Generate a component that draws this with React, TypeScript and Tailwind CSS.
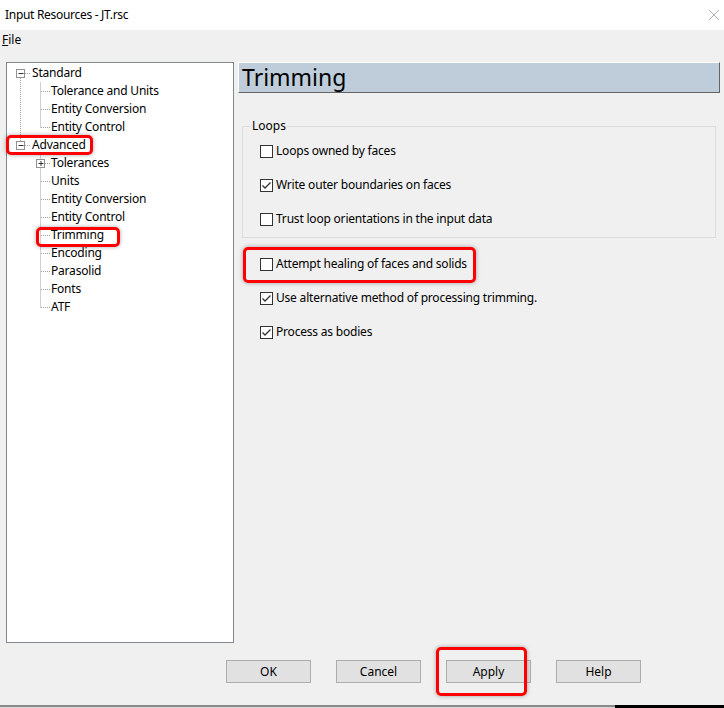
import React from "react";

const font = { fontFamily: '"Noto Sans", "Segoe UI", sans-serif' };

type Node = { label: string; depth: 0 | 1 };

const treeRows: Node[] = [
  { label: "Standard", depth: 0 },
  { label: "Tolerance and Units", depth: 1 },
  { label: "Entity Conversion", depth: 1 },
  { label: "Entity Control", depth: 1 },
  { label: "Advanced", depth: 0 },
  { label: "Tolerances", depth: 1 },
  { label: "Units", depth: 1 },
  { label: "Entity Conversion", depth: 1 },
  { label: "Entity Control", depth: 1 },
  { label: "Trimming", depth: 1 },
  { label: "Encoding", depth: 1 },
  { label: "Parasolid", depth: 1 },
  { label: "Fonts", depth: 1 },
  { label: "ATF", depth: 1 },
];

// red annotation rectangles drawn over the dialog
function Callout({ className }: { className: string }) {
  return (
    <div
      className={`pointer-events-none absolute rounded-[5px] border-[3px] border-[#ff0000] shadow-[0_0_4px_rgba(0,0,0,0.35)] ${className}`}
    />
  );
}

function ExpandBox({ x, y, plus }: { x: number; y: number; plus?: boolean }) {
  return (
    <g>
      <rect x={x - 4} y={y - 4} width={8} height={8} fill="#fff" stroke="#919191" />
      <line x1={x - 2} y1={y} x2={x + 3} y2={y} stroke="#333" />
      {plus && <line x1={x + 0.5} y1={y - 2.5} x2={x + 0.5} y2={y + 2.5} stroke="#333" />}
    </g>
  );
}

function TreeLines() {
  // coordinates relative to the tree's padding box, row centres every 18px
  const cy = (i: number) => 10.5 + i * 18;
  const dot = { stroke: "#a0a0a0", strokeDasharray: "1 1", strokeWidth: 1 };
  const children = [1, 2, 3, 5, 6, 7, 8, 9, 10, 11, 12, 13];
  return (
    <svg className="pointer-events-none absolute left-0 top-0" width="226" height="260">
      <line x1={13.5} y1={15} x2={13.5} y2={cy(4) - 4} {...dot} />
      <line x1={18} y1={cy(0)} x2={24} y2={cy(0)} {...dot} />
      <line x1={18} y1={cy(4)} x2={24} y2={cy(4)} {...dot} />
      <line x1={33.5} y1={cy(0) + 9} x2={33.5} y2={cy(3)} {...dot} />
      <line x1={33.5} y1={cy(4) + 9} x2={33.5} y2={cy(13)} {...dot} />
      {children.map((i) => (
        <line key={i} x1={34} y1={cy(i)} x2={43} y2={cy(i)} {...dot} />
      ))}
      <ExpandBox x={13.5} y={cy(0)} />
      <ExpandBox x={13.5} y={cy(4)} />
      <ExpandBox x={33.5} y={cy(5)} plus />
    </svg>
  );
}

function Tree() {
  return (
    <div className="relative h-[581px] w-[228px] shrink-0 border border-[#828790] bg-white pt-[1px]">
      <TreeLines />
      {treeRows.map((r, i) => (
        <div
          key={i}
          className={`flex h-[18px] items-center text-[12px] tracking-[-0.2px] text-black ${r.depth === 0 ? "pl-[25px]" : "pl-[44px]"}`}
        >
          {r.label}
        </div>
      ))}
      <Callout className="left-[-1px] top-[72px] h-[20px] w-[87px]" />
      <Callout className="left-[29px] top-[164px] h-[20px] w-[84px]" />
    </div>
  );
}

function CheckBox({ checked }: { checked: boolean }) {
  return (
    <span className="flex h-[13px] w-[13px] shrink-0 items-center justify-center border border-[#333] bg-white">
      {checked && (
        <svg width="11" height="11" viewBox="0 0 11 11">
          <polyline points="1.5,5.5 4,8 9.5,2.5" fill="none" stroke="#333" strokeWidth="1.3" />
        </svg>
      )}
    </span>
  );
}

function Option({
  label,
  checked,
  className = "",
  children,
}: {
  label: string;
  checked: boolean;
  className?: string;
  children?: React.ReactNode;
}) {
  return (
    <label className={`relative flex h-[18px] items-center gap-[3px] text-[12px] tracking-[-0.2px] text-black ${className}`}>
      <CheckBox checked={checked} />
      <span>{label}</span>
      {children}
    </label>
  );
}

function Button({ label, children }: { label: string; children?: React.ReactNode }) {
  return (
    <button className="relative h-[23px] w-[85px] border border-[#adadad] bg-[#e1e1e1] text-[12px] text-black">
      {label}
      {children}
    </button>
  );
}

export default function App() {
  return (
    <div className="flex h-[708px] w-[724px] flex-col overflow-hidden bg-[#f0f0f0]" style={font}>
      <div className="flex h-[30px] shrink-0 items-center justify-between bg-white pl-[5px] pr-[3px] text-[12px] tracking-[-0.3px] text-black">
        <span>Input Resources - JT.rsc</span>
        <svg width="12" height="12" viewBox="0 0 12 12" className="mr-[1px]">
          <path d="M1 1L11 11M11 1L1 11" stroke="#b0b0b0" strokeWidth="1" />
        </svg>
      </div>

      <div className="flex h-[20px] shrink-0 items-center pl-[2px] text-[12px] text-black">
        <span>
          <span className="underline">F</span>ile
        </span>
      </div>

      <div className="mt-[12px] flex gap-[4px] pl-[6px]">
        <Tree />

        <div className="flex w-[482px] flex-col">
          <div className="flex h-[31px] items-center border border-t-white border-l-white border-b-[#646464] border-r-[#646464] bg-[#bfcddb] pl-[3px] text-[23px] leading-none text-black">
            Trimming
          </div>

          <fieldset className="ml-[4px] mr-[4px] mt-[25px] border border-[#dcdcdc] pb-[9px] pl-[17px] pt-[8px]">
            <legend className="ml-[-9px] px-[1px] text-[12px] leading-[16px] text-black">Loops</legend>
            <Option label="Loops owned by faces" checked={false} />
            <Option label="Write outer boundaries on faces" checked className="mt-[16px]" />
            <Option label="Trust loop orientations in the input data" checked={false} className="mt-[16px]" />
          </fieldset>

          <div className="flex flex-col pl-[22px]">
            <Option label="Attempt healing of faces and solids" checked={false} className="mt-[17px]">
              <Callout className="left-[-17px] top-[-8px] h-[36px] w-[233px]" />
            </Option>
            <Option label="Use alternative method of processing trimming." checked className="mt-[16px]" />
            <Option label="Process as bodies" checked className="mt-[16px]" />
          </div>
        </div>
      </div>

      <div className="mt-[17px] flex gap-[25px] pl-[226px]">
        <Button label="OK" />
        <Button label="Cancel" />
        <Button label="Apply">
          <Callout className="left-[-11px] top-[-14px] h-[49px] w-[91px]" />
        </Button>
        <Button label="Help" />
      </div>

      <div className="mt-[22px] flex h-[3px] shrink-0">
        <div className="w-[615px] border-t-2 border-[#8a8a8a] bg-[#d8d8d8]" />
        <div className="flex-1 bg-black" />
      </div>
    </div>
  );
}
